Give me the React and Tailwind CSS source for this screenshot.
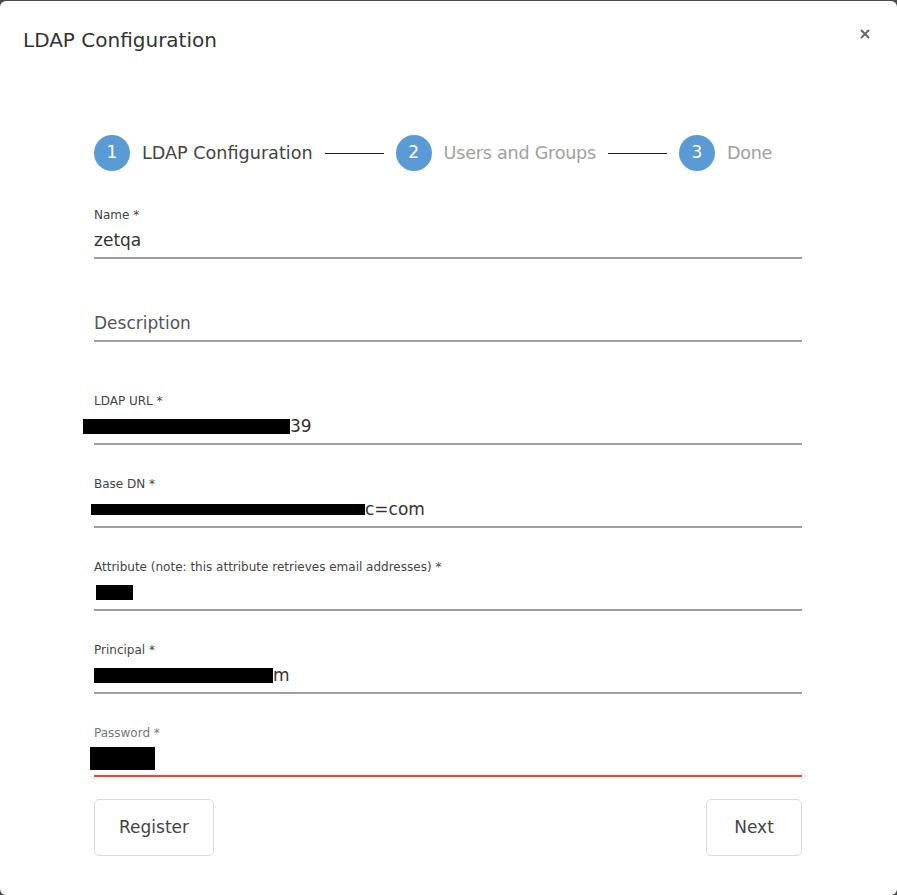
import { X } from 'lucide-react'

const font = { fontFamily: '"DejaVu Sans", sans-serif' }

function Step({ n, label, active }) {
  return (
    <div className="flex items-center gap-3">
      <div className="flex h-9 w-9 items-center justify-center rounded-full bg-[#5b9bd5] text-[17px] text-white">
        {n}
      </div>
      <span className={`text-[17.6px] ${active ? 'text-[#444]' : 'tracking-[-0.25px] text-[#a0a0a0]'}`}>{label}</span>
    </div>
  )
}

function Redact({ w, h = 15, className = '' }) {
  return <span className={`inline-block bg-black align-middle ${className}`} style={{ width: w, height: h }} />
}

function Field({ label, children, error, muted, className = '' }) {
  return (
    <div className={className}>
      <div className={`h-4 text-[12px] leading-4 ${muted ? 'text-[#777]' : 'text-[#444]'}`}>{label}</div>
      <div className="mt-[5px] flex h-6 items-center text-[17px] leading-6 text-[#333]">{children}</div>
      <div className={`mt-[5px] h-[2px] ${error ? 'bg-[#f44336]' : 'bg-[#9e9e9e]'}`} />
    </div>
  )
}

export default function App() {
  return (
    <div className="h-[895px] w-[897px] bg-[#4a4a4a] pt-px" style={font}>
      <div className="h-full rounded-md bg-white">
        <div className="flex items-start justify-between pl-[23px] pr-[25px] pt-[27px]">
          <h1 className="text-[20px] leading-6 text-[#333]">LDAP Configuration</h1>
          <button className="-mt-[1px] text-[#666]">
            <X className="h-[14px] w-[14px]" strokeWidth={3.4} />
          </button>
        </div>

        <div className="ml-[94px] mt-[83px] flex w-[708px] items-center">
          <Step n="1" label="LDAP Configuration" active />
          <div className="mx-[12px] h-px w-[59px] bg-[#222]" />
          <Step n="2" label="Users and Groups" />
          <div className="mx-[12px] h-px w-[59px] bg-[#222]" />
          <Step n="3" label="Done" />
        </div>

        <div className="ml-[94px] mt-[36px] flex w-[708px] flex-col gap-[31px]">
          <Field label="Name *">zetqa</Field>
          <Field label="" className="mb-[20px]">
            <span className="text-[#555]">Description</span>
          </Field>
          <Field label="LDAP URL *">
            <Redact w={207} className="-ml-[11px]" />
            <span>39</span>
          </Field>
          <Field label="Base DN *">
            <Redact w={274} h={11} className="-ml-[3px]" />
            <span>c=com</span>
          </Field>
          <Field label="Attribute (note: this attribute retrieves email addresses) *">
            <Redact w={37} className="ml-[2px]" />
          </Field>
          <Field label="Principal *">
            <Redact w={179} />
            <span>m</span>
          </Field>
          <Field label="Password *" error muted>
            <Redact w={65} h={23} className="-ml-[4px]" />
          </Field>
        </div>

        <div className="ml-[94px] mt-[22px] flex w-[708px] justify-between">
          <button className="h-[57px] w-[120px] rounded-[5px] border border-[#dcdcdc] bg-white text-[17px] text-[#444]">
            Register
          </button>
          <button className="h-[57px] w-[96px] rounded-[5px] border border-[#dcdcdc] bg-white text-[17px] text-[#444]">
            Next
          </button>
        </div>
      </div>
    </div>
  )
}
